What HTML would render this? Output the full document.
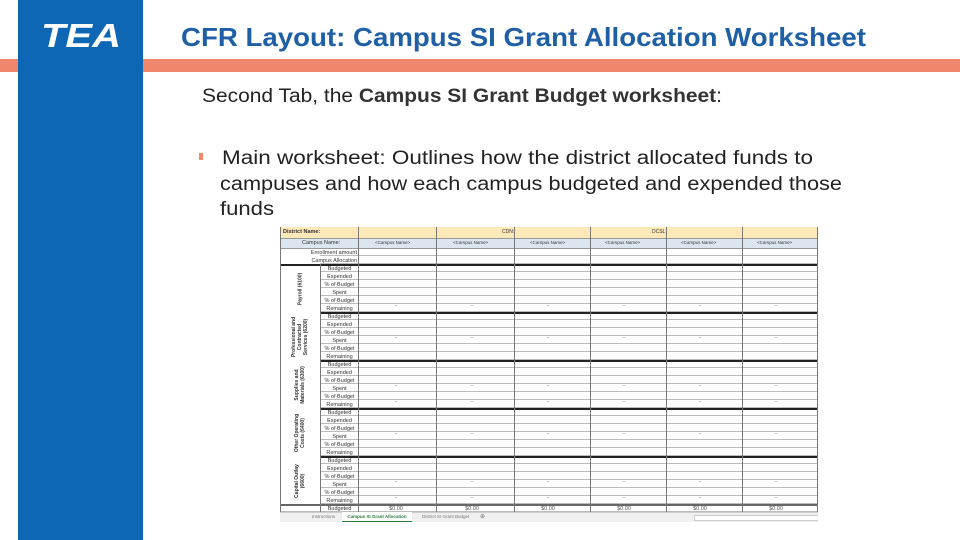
<!DOCTYPE html>
<html><head><meta charset="utf-8"><style>
html,body{margin:0;padding:0;width:960px;height:540px;overflow:hidden;background:#fff;font-family:"Liberation Sans",sans-serif}
.abs{position:absolute}
.ss{position:absolute;left:280px;top:227px;width:538px;height:295px;background:#fff;overflow:hidden;font-size:5px;color:#333}
.hl{position:absolute;left:0;width:538px;height:1px;background:#999}
.th{position:absolute;left:0;width:538px;height:2px;background:#222}
.vl{position:absolute;top:0;width:1px;background:#777}
.lab{position:absolute;left:41px;width:37px;text-align:center;font-size:5.5px;line-height:8px;color:#333}
.rot{position:absolute;left:0;width:40px;display:flex;align-items:center;justify-content:center}
.rot span{transform:rotate(-90deg);white-space:nowrap;font-size:5px;font-weight:bold;line-height:6px;text-align:center;color:#333}
.dash{position:absolute;left:78px;width:460px;font-size:6px;color:#555}
.dash i{display:inline-block;width:76px;text-align:center;font-style:normal}
</style></head><body>
<div class="abs" style="left:0;top:59px;width:960px;height:13px;background:#f0866c"></div>
<div class="abs" style="left:18px;top:0;width:125px;height:540px;background:#0d67b5"></div>
<svg class="abs" style="left:0;top:0" width="960" height="230">
<text x="41" y="47" font-family="Liberation Sans" font-weight="bold" font-style="italic" font-size="33" fill="#fff" textLength="80" lengthAdjust="spacingAndGlyphs">TEA</text>
<text x="181" y="46" font-family="Liberation Sans" font-weight="bold" font-size="26" fill="#1f5fa6" textLength="685" lengthAdjust="spacingAndGlyphs">CFR Layout: Campus SI Grant Allocation Worksheet</text>
<text x="202" y="102" font-family="Liberation Sans" font-size="19" fill="#222" textLength="520" lengthAdjust="spacingAndGlyphs">Second Tab, the <tspan font-weight="bold" fill="#333">Campus SI Grant Budget worksheet</tspan>:</text>
<rect x="199" y="153" width="4" height="7" fill="#f0866c"/>
<text x="222" y="164" font-family="Liberation Sans" font-size="19" fill="#222" textLength="591" lengthAdjust="spacingAndGlyphs">Main worksheet: Outlines how the district allocated funds to</text>
<text x="220" y="190" font-family="Liberation Sans" font-size="19" fill="#222" textLength="622" lengthAdjust="spacingAndGlyphs">campuses and how each campus budgeted and expended those</text>
<text x="220" y="215" font-family="Liberation Sans" font-size="19" fill="#222" textLength="54" lengthAdjust="spacingAndGlyphs">funds</text>
</svg>
<div class="ss">
<div class="abs" style="left:0;top:0;width:538px;height:11px;background:#fde9b8"></div>
<div class="abs" style="left:0;top:11px;width:538px;height:10px;background:#dce6f1"></div>
<div class="abs" style="left:3px;top:2px;font-weight:bold;font-size:5.5px">District Name:</div>
<div class="abs" style="left:222px;top:2px;font-size:5px">CDN:</div>
<div class="abs" style="left:372px;top:2px;font-size:5px">DCSL:</div>
<div class="abs" style="left:22px;top:13px;font-size:5.5px">Campus Name:</div>
<div class="abs" style="left:95px;top:13px;font-size:4.5px">&lt;Campus Name&gt;</div>
<div class="abs" style="left:173px;top:13px;font-size:4.5px">&lt;Campus Name&gt;</div>
<div class="abs" style="left:250px;top:13px;font-size:4.5px">&lt;Campus Name&gt;</div>
<div class="abs" style="left:325px;top:13px;font-size:4.5px">&lt;Campus Name&gt;</div>
<div class="abs" style="left:401px;top:13px;font-size:4.5px">&lt;Campus Name&gt;</div>
<div class="abs" style="left:477px;top:13px;font-size:4.5px">&lt;Campus Name&gt;</div>
<div class="abs" style="left:0;top:21px;width:538px;height:264px;background:repeating-linear-gradient(to bottom,transparent 0,transparent 7px,#bbb 7px,#bbb 8px)"></div>
<div class="abs" style="left:0;top:21px;width:40px;height:16px;background:#fff"></div>
<div class="hl" style="top:11px"></div><div class="hl" style="top:21px"></div>
<div class="th" style="top:37px"></div><div class="th" style="top:85px"></div><div class="th" style="top:133px"></div><div class="th" style="top:181px"></div><div class="th" style="top:229px"></div><div class="th" style="top:277px;background:#666"></div>
<div class="abs" style="left:0;top:39px;width:40px;height:238px;background:#fff"></div>
<div class="vl" style="left:40px;top:37px;height:248px"></div>
<div class="vl" style="left:78px;height:285px"></div>
<div class="vl" style="left:156px;height:285px"></div>
<div class="vl" style="left:234px;height:285px"></div>
<div class="vl" style="left:310px;height:285px"></div>
<div class="vl" style="left:386px;height:285px"></div>
<div class="vl" style="left:462px;height:285px"></div>
<div class="vl" style="left:537px;height:285px"></div>
<div class="vl" style="left:0;height:285px"></div>
<div class="rot" style="top:39px;height:46px"><span>Payroll (6100)</span></div>
<div class="rot" style="top:87px;height:46px"><span>Professional and<br>Contracted<br>Services (6200)</span></div>
<div class="rot" style="top:135px;height:46px"><span>Supplies and<br>Materials (6300)</span></div>
<div class="rot" style="top:183px;height:46px"><span>Other Operating<br>Costs (6400)</span></div>
<div class="rot" style="top:231px;height:46px"><span>Capital Outlay<br>(6600)</span></div>
<div class="abs" style="left:22px;top:22px;font-size:5.5px;line-height:8px;text-align:right;width:55px">Enrollment amount<br>Campus Allocation</div>
<div class="lab" style="top:38px">Budgeted<br>Expended<br>% of Budget<br>Spent<br>% of Budget<br>Remaining<br>Budgeted<br>Expended<br>% of Budget<br>Spent<br>% of Budget<br>Remaining<br>Budgeted<br>Expended<br>% of Budget<br>Spent<br>% of Budget<br>Remaining<br>Budgeted<br>Expended<br>% of Budget<br>Spent<br>% of Budget<br>Remaining<br>Budgeted<br>Expended<br>% of Budget<br>Spent<br>% of Budget<br>Remaining<br>Budgeted</div>
<div class="dash" style="top:76px"><i>-</i><i>-</i><i>-</i><i>-</i><i>-</i><i>-</i></div>
<div class="dash" style="top:108px"><i>-</i><i>-</i><i>-</i><i>-</i><i>-</i><i>-</i></div>
<div class="dash" style="top:156px"><i>-</i><i>-</i><i>-</i><i>-</i><i>-</i><i>-</i></div>
<div class="dash" style="top:172px"><i>-</i><i>-</i><i>-</i><i>-</i><i>-</i><i>-</i></div>
<div class="dash" style="top:204px"><i>-</i><i>-</i><i>-</i><i>-</i><i>-</i><i>-</i></div>
<div class="dash" style="top:252px"><i>-</i><i>-</i><i>-</i><i>-</i><i>-</i><i>-</i></div>
<div class="dash" style="top:268px"><i>-</i><i>-</i><i>-</i><i>-</i><i>-</i><i>-</i></div>
<div class="dash" style="top:279px;font-size:5.5px"><i>$0.00</i><i>$0.00</i><i>$0.00</i><i>$0.00</i><i>$0.00</i><i>$0.00</i></div>
<div class="abs" style="left:0;top:285px;width:538px;height:10px;background:#f0f0f0;border-top:1px solid #ccc"></div>
<div class="abs" style="left:62px;top:285px;width:70px;height:9px;background:#fff;border-bottom:1px solid #2a7a3a;font-size:4.5px;color:#2a7a3a;font-weight:bold;line-height:9px;text-align:center">Campus SI Grant Allocation</div>
<div class="abs" style="left:32px;top:287px;font-size:4.5px;color:#777">Instructions</div>
<div class="abs" style="left:142px;top:287px;font-size:4.5px;color:#777">District SI Grant Budget</div>
<div class="abs" style="left:200px;top:286px;font-size:6px;color:#777">⊕</div>
<div class="abs" style="left:414px;top:288px;width:124px;height:4px;background:#fff;border:1px solid #ccc"></div>
</div>
</body></html>
